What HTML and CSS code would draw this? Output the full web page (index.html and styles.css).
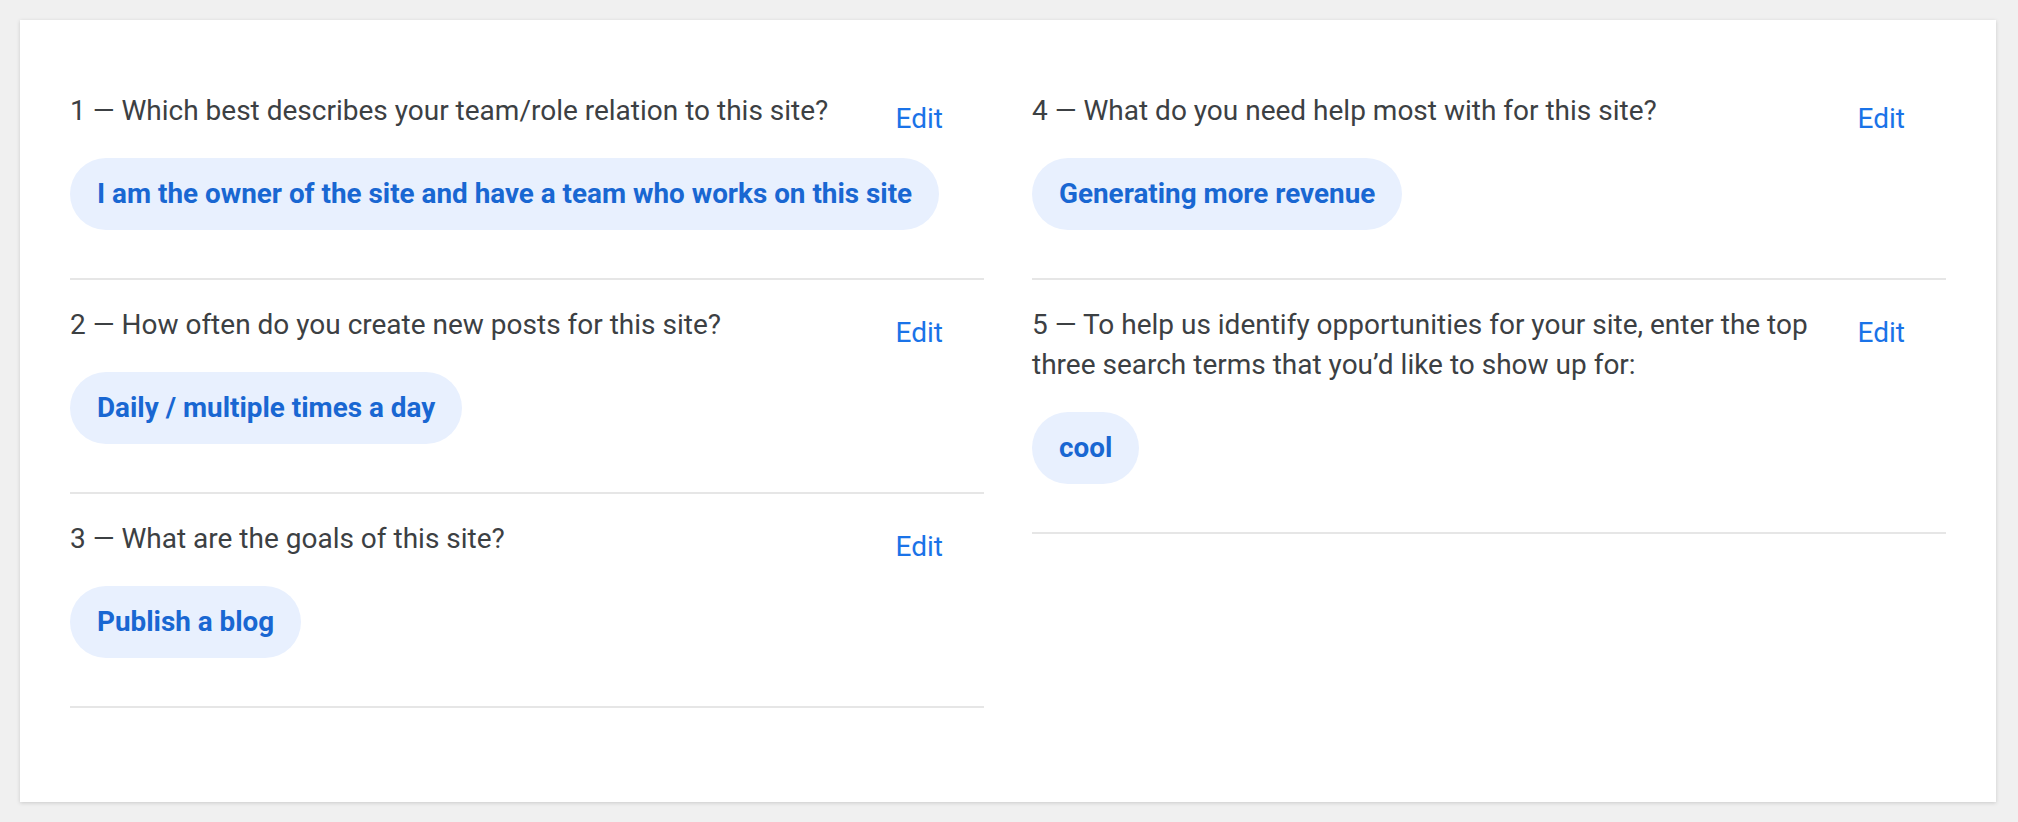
FILE: index.html
```html
<!DOCTYPE html>
<html lang="en">
<head>
<meta charset="utf-8">
<title>Site questionnaire answers</title>
<link rel="stylesheet" href="styles.css">
</head>
<body>
<div class="card">
  <div class="cols">
    <div class="col">
      <div class="item">
        <div class="head">
          <div class="question">1 — Which best describes your team/role relation to this site?</div>
          <a class="edit">Edit</a>
        </div>
        <div class="answers"><span class="pill">I am the owner of the site and have a team who works on this site</span></div>
      </div>
      <div class="item">
        <div class="head">
          <div class="question">2 — How often do you create new posts for this site?</div>
          <a class="edit">Edit</a>
        </div>
        <div class="answers"><span class="pill">Daily / multiple times a day</span></div>
      </div>
      <div class="item">
        <div class="head">
          <div class="question">3 — What are the goals of this site?</div>
          <a class="edit">Edit</a>
        </div>
        <div class="answers"><span class="pill">Publish a blog</span></div>
      </div>
    </div>
    <div class="col">
      <div class="item">
        <div class="head">
          <div class="question">4 — What do you need help most with for this site?</div>
          <a class="edit">Edit</a>
        </div>
        <div class="answers"><span class="pill">Generating more revenue</span></div>
      </div>
      <div class="item">
        <div class="head">
          <div class="question">5 — To help us identify opportunities for your site, enter the top three search terms that you’d like to show up for:</div>
          <a class="edit">Edit</a>
        </div>
        <div class="answers"><span class="pill">cool</span></div>
      </div>
    </div>
  </div>
</div>
</body>
</html>
```
FILE: styles.css
```css
html, body {
  margin: 0;
  padding: 0;
}
body {
  background: #f0f0f0;
  font-family: Roboto, "Liberation Sans", Arial, sans-serif;
  padding: 20px 22px 20px 20px;
}
.card {
  background: #ffffff;
  box-shadow: 0 1px 4px rgba(0, 0, 0, 0.16);
  padding: 46px 50px 94px 50px;
}
.cols {
  display: grid;
  grid-template-columns: 1fr 1fr;
  column-gap: 48px;
  align-items: start;
}
.item {
  padding: 25px 0 48px 0;
  border-bottom: 2px solid #e6e6e6;
}
.head {
  display: flex;
  align-items: flex-start;
}
.question {
  flex: 1;
  color: #3c4043;
  font-size: 28px;
  line-height: 40px;
}
.edit {
  color: #1a73e8;
  font-size: 28px;
  line-height: 40px;
  margin: 8px 41px -8px 30px;
  cursor: pointer;
}
.answers {
  margin-top: 27px;
  display: flex;
  flex-wrap: wrap;
}
.pill {
  display: inline-block;
  height: 72px;
  line-height: 72px;
  padding: 0 27px;
  border-radius: 36px;
  background: #e8f0fe;
  color: #1967d2;
  font-size: 27.85px;
  font-weight: 700;
}
```
